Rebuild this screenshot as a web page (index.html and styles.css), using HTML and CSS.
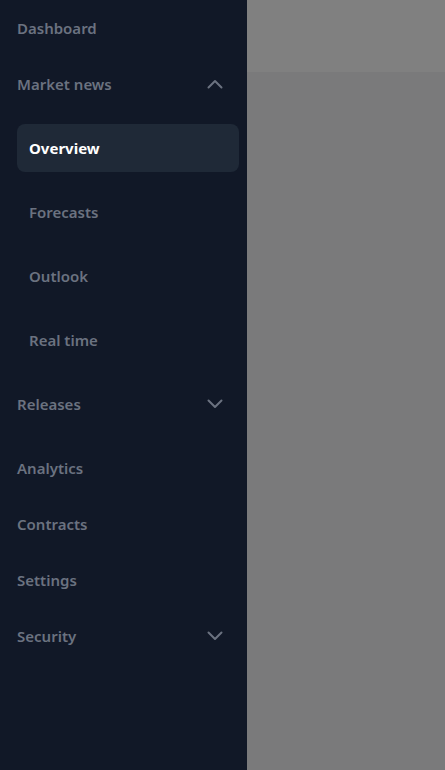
FILE: index.html
```html
<!DOCTYPE html>
<html lang="en">
<head>
    <meta charset="UTF-8">
    <meta name="viewport" content="width=device-width, initial-scale=1.0">
    <title>Sidebar</title>
    <link rel="stylesheet" href="styles.css">
</head>
<body>
    <div class="page">
        <aside class="sidebar">
            <nav class="nav">
                <a class="nav-link">Dashboard</a>

                <div class="group">
                    <button class="nav-link group-toggle">
                        Market news
                        <svg class="chevron" width="16" height="10" viewBox="0 0 16 10"><polyline points="1.5,8.5 8,2 14.5,8.5"/></svg>
                    </button>
                    <div class="submenu">
                        <a class="sub-link active">Overview</a>
                        <a class="sub-link">Forecasts</a>
                        <a class="sub-link">Outlook</a>
                        <a class="sub-link">Real time</a>
                    </div>
                </div>

                <div class="group">
                    <button class="nav-link group-toggle">
                        Releases
                        <svg class="chevron" width="16" height="10" viewBox="0 0 16 10"><polyline points="1.5,1.5 8,8 14.5,1.5"/></svg>
                    </button>
                </div>

                <a class="nav-link">Analytics</a>
                <a class="nav-link">Contracts</a>
                <a class="nav-link">Settings</a>

                <div class="group">
                    <button class="nav-link group-toggle">
                        Security
                        <svg class="chevron" width="16" height="10" viewBox="0 0 16 10"><polyline points="1.5,1.5 8,8 14.5,1.5"/></svg>
                    </button>
                </div>
            </nav>
        </aside>

        <!-- dimmed page behind the open drawer -->
        <div class="backdrop">
            <div class="topbar"></div>
            <div class="content"></div>
        </div>
    </div>
</body>
</html>
```

FILE: styles.css
```css
html, body {
    margin: 0;
    height: 100%;
}
body {
    font-family: "Noto Sans", "Open Sans", sans-serif;
    background-color: #7a7a7b;
}
.page {
    display: flex;
    height: 100vh;
}
/* Drawer */
.sidebar {
    width: 247px;
    flex-shrink: 0;
    background-color: #111827;
    padding: 0 8px 0 17px;
    box-sizing: border-box;
}
.nav {
    display: flex;
    flex-direction: column;
}
.nav-link {
    display: flex;
    align-items: center;
    justify-content: space-between;
    height: 56px;
    padding: 0 16px 0 0;
    margin: 0;
    border: 0;
    background: none;
    font-family: inherit;
    font-size: 15px;
    font-weight: 600;
    color: #6b7280;
    text-align: left;
    cursor: pointer;
    box-sizing: border-box;
    width: 100%;
}
.chevron {
    fill: none;
    stroke: #6b7280;
    stroke-width: 2;
    stroke-linecap: round;
    stroke-linejoin: round;
}
.group {
    margin-bottom: 8px;
}
.submenu {
    display: flex;
    flex-direction: column;
    gap: 16px;
    padding: 12px 0 4px;
}
.sub-link {
    display: flex;
    align-items: center;
    height: 48px;
    padding-left: 12px;
    border-radius: 8px;
    font-size: 15px;
    font-weight: 600;
    color: #6b7280;
    cursor: pointer;
}
.sub-link.active {
    background-color: #1f2937;
    color: #ffffff;
    font-weight: 700;
}
/* Page behind overlay */
.backdrop {
    flex: 1;
    display: flex;
    flex-direction: column;
}
.topbar {
    height: 72px;
    background-color: #808080;
}
.content {
    flex: 1;
    background-color: #7a7a7b;
}
```
